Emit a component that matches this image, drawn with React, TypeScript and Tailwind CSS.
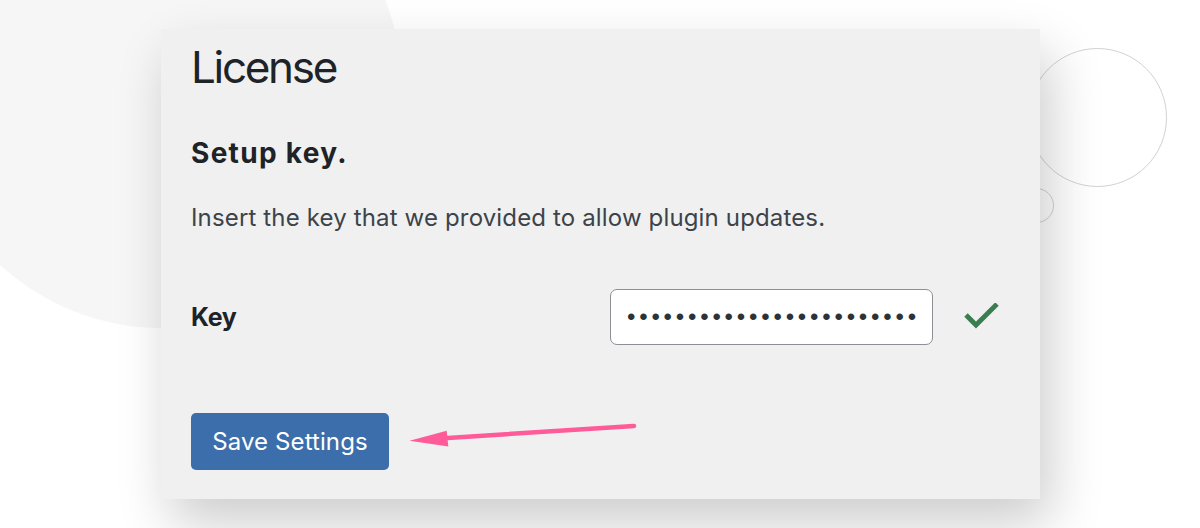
import React from 'react';

const font = { fontFamily: 'Inter, "Noto Sans", sans-serif' };

function CheckIcon() {
  return (
    <svg width="36" height="28" viewBox="0 0 36 28" className="shrink-0">
      <polyline
        points="2,12 12,22 33,1"
        fill="none"
        stroke="#3a7d50"
        strokeWidth="4.8"
        strokeLinejoin="miter"
      />
    </svg>
  );
}

function PointerArrow() {
  // annotation drawn over the card
  return (
    <svg
      className="absolute left-0 top-0 pointer-events-none z-20"
      width="1200"
      height="528"
      viewBox="0 0 1200 528"
    >
      <line x1="634" y1="426" x2="440" y2="438.5" stroke="#ff5b98" strokeWidth="4.5" strokeLinecap="round" />
      <polygon points="409.5,440.8 446.7,430.8 448.3,446.4" fill="#ff5b98" />
    </svg>
  );
}

export default function App() {
  return (
    <div className="relative w-[1200px] h-[528px] overflow-hidden bg-white" style={font}>
      {/* decorative background shapes */}
      <div className="absolute left-[-78px] top-[-152px] w-[480px] h-[480px] rounded-full bg-[#f6f6f7]" />
      <div className="absolute left-[1028px] top-[48px] w-[139px] h-[139px] rounded-full border border-[#d2d2d4]" />
      <div className="absolute left-[1019px] top-[188px] w-[35px] h-[35px] rounded-full border border-[#d2d2d4]" />

      <div className="relative z-10 ml-[161px] mt-[29px] w-[879px] bg-[#f0f0f1] pl-[30px] pr-[40px] pt-[16px] pb-[29px] shadow-[10px_24px_50px_rgba(0,0,0,0.2)]">
        <h1 className="text-[44px] leading-none font-normal text-[#1d2327] tracking-[-2.3px]">License</h1>

        <h2 className="mt-[50px] text-[28px] leading-none font-bold text-[#1d2327] tracking-[1.3px]">Setup key.</h2>

        <p className="mt-[39px] text-[24px] leading-none text-[#3c434a] tracking-[0.15px]">
          Insert the key that we provided to allow plugin updates.
        </p>

        <div className="mt-[59px] flex items-center">
          <label className="w-[420px] text-[25px] leading-none font-bold text-[#1d2327] tracking-[-0.3px]">Key</label>
          <input
            type="password"
            readOnly
            value="xxxxxxxxxxxxxxxxxxxxxxxx"
            className="w-[323px] h-[56px] rounded-[7px] border-[1.5px] border-[#8c8f94] bg-white pl-[16px] text-[24px] tracking-[3.8px] text-[#2c3338] outline-none"
            style={{ fontFamily: '"Liberation Sans", Arial, sans-serif' }}
          />
          <div className="ml-[31px]">
            <CheckIcon />
          </div>
        </div>

        <button className="mt-[68px] w-[198px] h-[57px] rounded-[5px] bg-[#3b6eaa] text-white text-[24px] leading-none tracking-[0.1px] text-center">
          Save Settings
        </button>
      </div>

      <PointerArrow />
    </div>
  );
}
